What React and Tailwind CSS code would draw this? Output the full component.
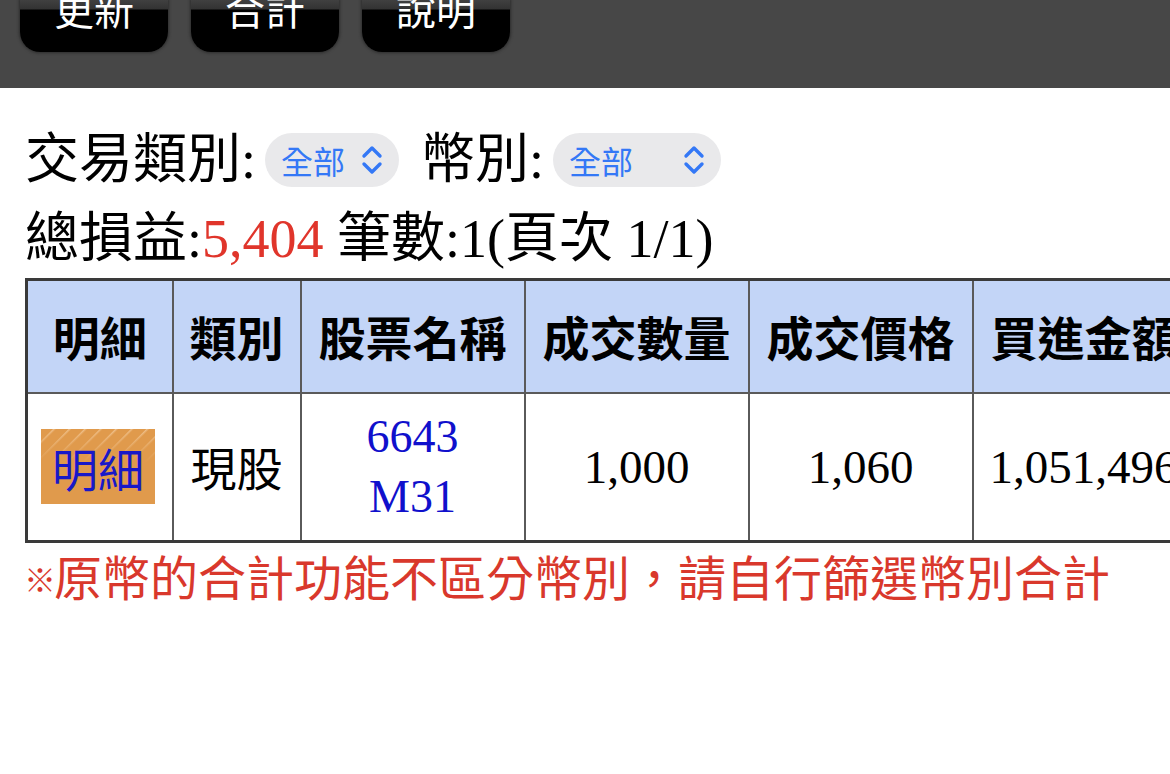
import React from 'react';

const serif = { fontFamily: '"Liberation Serif", "Noto Sans CJK TC", serif' };
const sans = { fontFamily: '"Noto Sans CJK TC", "Liberation Sans", sans-serif' };

const UpDown = () => (
  <svg width="26" height="30" viewBox="0 0 26 30" fill="none">
    <path d="M5 11l8-8 8 8M5 19l8 8 8-8" stroke="#3478f6" strokeWidth="3.4" strokeLinecap="round" strokeLinejoin="round" />
  </svg>
);

const Pill = ({ width }) => (
  <div
    className={`h-[54px] ${width} rounded-full bg-[#e9e9eb] flex items-center justify-between pl-[16px] pr-[14px]`}
  >
    <span className="text-[32px] leading-none text-[#3478f6]" style={sans}>全部</span>
    <UpDown />
  </div>
);

const TopButton = ({ label }) => (
  <div className="w-[148px] h-[52px] rounded-b-[20px] overflow-hidden bg-[linear-gradient(to_bottom,#404040_0,#333_9px,#000_10px)] shadow-[0_0_3px_1px_#2c2c2c] flex justify-center">
    <span className="text-white text-[40px] leading-[40px] -mt-[12px]" style={sans}>{label}</span>
  </div>
);

export default function App() {
  const headers = ['明細', '類別', '股票名稱', '成交數量', '成交價格', '買進金額'];
  const widths = ['w-[146px]', 'w-[128px]', 'w-[224px]', 'w-[224px]', 'w-[224px]', 'w-[224px]'];

  return (
    <div className="w-[1170px] h-[774px] bg-white overflow-hidden" style={serif}>
      {/* top toolbar */}
      <div className="h-[88px] bg-[#474747] flex gap-[23px] pl-[20px]">
        <TopButton label="更新" />
        <TopButton label="合計" />
        <TopButton label="說明" />
      </div>

      {/* filters */}
      <div className="mt-[45px] pl-[25px] flex items-center h-[54px]">
        <span className="text-[54px] leading-none text-black">交易類別:</span>
        <div className="ml-[9px]"><Pill width="w-[134px]" /></div>
        <span className="ml-[22px] text-[54px] leading-none text-black">幣別:</span>
        <div className="ml-[9px]"><Pill width="w-[168px]" /></div>
      </div>

      {/* summary */}
      <div className="h-[91px] pl-[25px] pt-[12px] flex items-center text-[54px] leading-none text-black whitespace-nowrap">
        總損益:<span className="text-[#e0352b]">5,404</span>&nbsp;筆數:1(頁次 1/1)
      </div>

      {/* table */}
      <div className="pl-[25px] w-[1300px]">
        <table className="border-collapse border-t-[3px] border-l-[3px] border-b-[3px] border-[#3a3a3a]">
          <thead>
            <tr className="h-[113px] bg-[#c3d5f7]">
              {headers.map((h, i) => (
                <th
                  key={h}
                  className={`${widths[i]} border-r-[2px] border-b-[2px] border-[#5a5a5a] text-[47px] font-bold text-black whitespace-nowrap px-0`}
                  style={sans}
                >
                  {h}
                </th>
              ))}
            </tr>
          </thead>
          <tbody>
            <tr className="h-[149px] bg-white text-center">
              <td className="border-r-[2px] border-[#5a5a5a]">
                <div className="ml-[13px] w-[114px] h-[75px] flex items-center justify-center bg-[linear-gradient(to_bottom,rgba(224,154,76,0)_0,#e09a4c_45%),repeating-linear-gradient(135deg,#e09a4c_0,#e09a4c_8px,#efc08a_9px,#e09a4c_11px)]">
                  <span className="text-[46px] leading-none text-[#1818c8]" style={sans}>明細</span>
                </div>
              </td>
              <td className="border-r-[2px] border-[#5a5a5a] text-[46px] text-black" style={sans}>現股</td>
              <td className="border-r-[2px] border-[#5a5a5a] text-[46px] leading-[60px] text-[#1010cc]">
                6643<br />M31
              </td>
              <td className="border-r-[2px] border-[#5a5a5a] text-[47px] text-black">1,000</td>
              <td className="border-r-[2px] border-[#5a5a5a] text-[47px] text-black">1,060</td>
              <td className="border-r-[2px] border-[#5a5a5a] text-[47px] text-black text-left pl-[16px] whitespace-nowrap">1,051,496</td>
            </tr>
          </tbody>
        </table>
      </div>

      {/* note */}
      <div className="pl-[24px] mt-[2px] text-[48px] leading-[60px] text-[#d9382c] whitespace-nowrap" style={sans}>
        <span className="inline-block w-[30px] text-[32px] font-bold align-[4px]">※</span>原幣的合計功能不區分幣別，請自行篩選幣別合計
      </div>
    </div>
  );
}
